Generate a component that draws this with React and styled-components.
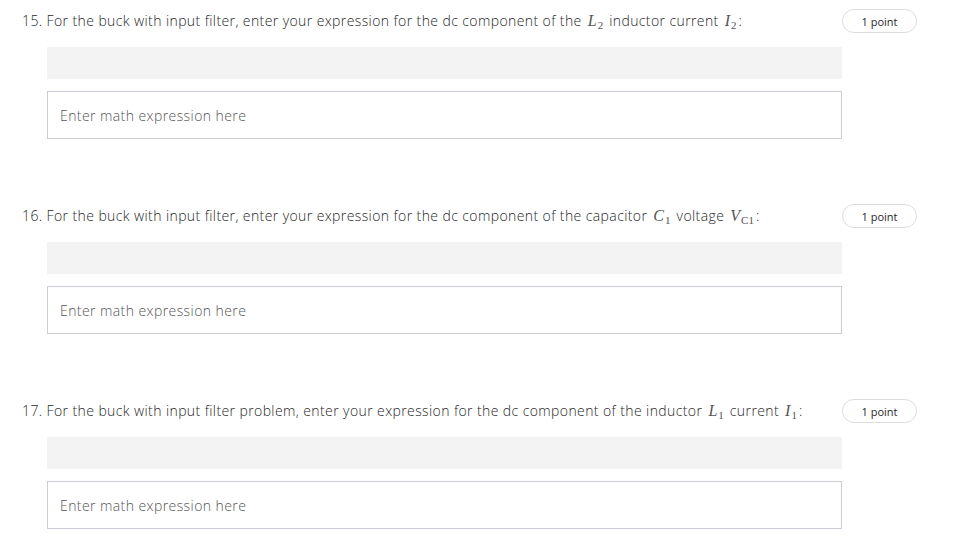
import React from 'react';
import styled, { createGlobalStyle } from 'styled-components';

const GlobalStyle = createGlobalStyle`
  html, body {
    margin: 0;
    padding: 0;
    background: #fff;
  }
  body {
    font-family: "Open Sans", "Liberation Sans", sans-serif;
    color: #1f1f1f;
  }
`;

const Page = styled.div`
  width: 954px;
  padding: 9px 37px 0 22px;
  box-sizing: border-box;
  display: flex;
  flex-direction: column;
  gap: 65px;
`;

const Question = styled.section`
  display: flex;
  flex-direction: column;
`;

const Header = styled.div`
  display: flex;
  align-items: center;
  justify-content: space-between;
  height: 24px;
`;

const Prompt = styled.div`
  font-size: 14px;
  font-weight: 300;
  letter-spacing: 0.4px;
  line-height: 24px;
  color: #1f1f1f;
  white-space: nowrap;
`;

const MathVar = styled.span`
  font-family: "Liberation Serif", "DejaVu Serif", serif;
  font-style: italic;
  font-weight: 400;
  font-size: 16px;
  letter-spacing: 0;
  color: #555;
  margin: 0 2px;
`;

const Sub = styled.sub`
  font-style: normal;
  font-size: 11px;
  vertical-align: -3px;
  line-height: 0;
  margin-left: 1px;
`;

const Points = styled.span`
  width: 75px;
  height: 24px;
  box-sizing: border-box;
  border: 1px solid #dcdcdc;
  border-radius: 12px;
  display: flex;
  align-items: center;
  justify-content: center;
  font-size: 11px;
  color: #1f1f1f;
`;

const Body = styled.div`
  margin: 14px 75px 0 25px;
  display: flex;
  flex-direction: column;
  gap: 12px;
`;

const Preview = styled.div`
  height: 32px;
  background: #f3f3f3;
`;

const MathInput = styled.div`
  height: 48px;
  box-sizing: border-box;
  border: 1px solid #ccccd4;
  padding: 0 12px;
  display: flex;
  align-items: center;
  font-size: 14px;
  font-weight: 300;
  letter-spacing: 0.42px;
  color: #555;
`;

const V = ({ name, sub }) => (
  <MathVar>
    {name}
    <Sub>{sub}</Sub>
  </MathVar>
);

const questions = [
  {
    n: 15,
    text: (
      <>
        For the buck with input filter, enter your expression for the dc component of the <V name="L" sub="2" /> inductor current <V name="I" sub="2" />:
      </>
    ),
  },
  {
    n: 16,
    text: (
      <>
        For the buck with input filter, enter your expression for the dc component of the capacitor <V name="C" sub="1" /> voltage <V name="V" sub="C1" />:
      </>
    ),
  },
  {
    n: 17,
    text: (
      <>
        For the buck with input filter problem, enter your expression for the dc component of the inductor <V name="L" sub="1" /> current <V name="I" sub="1" />:
      </>
    ),
  },
];

export default function App() {
  return (
    <>
      <GlobalStyle />
      <Page>
        {questions.map(q => (
          <Question key={q.n}>
            <Header>
              <Prompt>
                {q.n}. {q.text}
              </Prompt>
              <Points>1 point</Points>
            </Header>
            <Body>
              <Preview />
              <MathInput>Enter math expression here</MathInput>
            </Body>
          </Question>
        ))}
      </Page>
    </>
  );
}
